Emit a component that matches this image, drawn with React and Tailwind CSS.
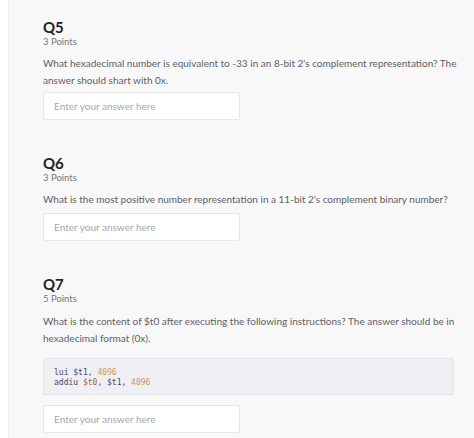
import React from 'react';

const Answer = ({ className = '' }) => (
  <div className={`w-[197px] h-[28px] bg-white border border-[#e6e7ea] rounded-[2px] flex items-center pl-[10px] text-[10px] text-[#a5a8ad] ${className}`}>
    Enter your answer here
  </div>
);

const Heading = ({ num, points }) => (
  <>
    <div className="text-[15px] leading-[16px] font-bold text-[#232323]">{num}</div>
    <div className="mt-[2px] text-[9.5px] leading-[10px] text-[#74777c]">{points}</div>
  </>
);

export default function App() {
  return (
    <div className="w-[474px] h-[438px] bg-white flex font-['Lato',sans-serif] overflow-hidden">
      <div className="w-[9px] border-r border-[#ededef]" />
      <div className="flex-1 bg-[#f8f8f9] pt-[19px] pl-[34px] flex flex-col">
        {/* Q5 */}
        <Heading num="Q5" points="3 Points" />
        <p className="mt-[8px] text-[10px] leading-[17px] text-[#5d6066] w-[425px]">
          What hexadecimal number is equivalent to -33 in an 8-bit 2's complement representation? The
          answer should shart with 0x.
        </p>
        <Answer className="mt-[3px]" />

        {/* Q6 */}
        <div className="mt-[35px]">
          <Heading num="Q6" points="3 Points" />
        </div>
        <p className="mt-[8px] text-[10px] leading-[17px] text-[#5d6066] w-[425px]">
          What is the most positive number representation in a 11-bit 2's complement binary number?
        </p>
        <Answer className="mt-[5px]" />

        {/* Q7 */}
        <div className="mt-[35px]">
          <Heading num="Q7" points="5 Points" />
        </div>
        <p className="mt-[9px] text-[10px] leading-[17px] text-[#5d6066] w-[412px]">
          What is the content of $t0 after executing the following instructions? The answer should be in
          hexadecimal format (0x).
        </p>
        <pre className="mt-[11px] w-[411px] h-[37px] bg-[#eff0f3] border border-[#e3e5e9] rounded-[2px] pl-[10px] pt-[9px] font-['DejaVu_Sans_Mono',monospace] text-[8px] leading-[10px] text-[#4d4466]">
          <span>lui</span> <span className="text-[#4f416f]">$t1</span>, <span className="text-[#c9975b]">4096</span>{'\n'}
          <span>addiu</span> <span className="text-[#b25a48]">$t0</span>, <span className="text-[#4f416f]">$t1</span>, <span className="text-[#c9975b]">4096</span>
        </pre>
        <Answer className="mt-[10px]" />
      </div>
    </div>
  );
}
